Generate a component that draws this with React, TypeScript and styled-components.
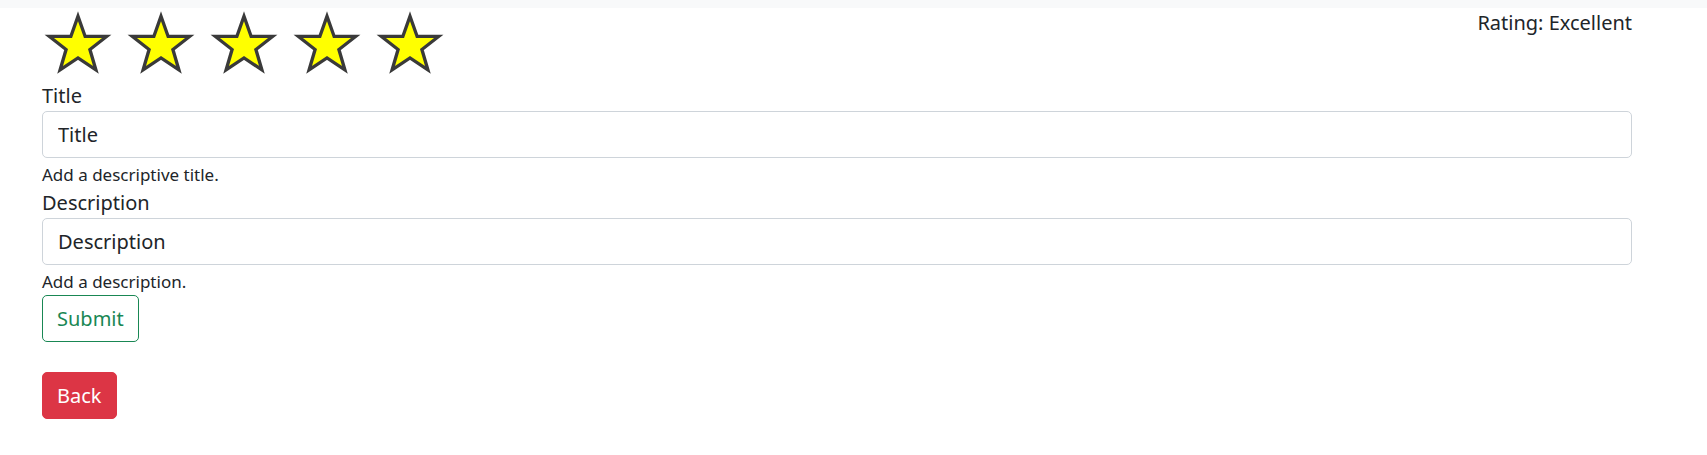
import React from "react";
import styled, { createGlobalStyle } from "styled-components";

const GlobalStyle = createGlobalStyle`
  html, body {
    margin: 0;
    padding: 0;
    background: #ffffff;
  }
  body {
    font-family: "Noto Sans", "Open Sans", sans-serif;
    font-size: 20px;
    line-height: 1.5;
    color: #212529;
  }
  * { box-sizing: border-box; }
`;

const TopBar = styled.div`
  height: 8px;
  background: #f8f9fa;
`;

const Page = styled.main`
  width: 1590px;
  margin-left: 42px;
  display: flex;
  flex-direction: column;
`;

const Header = styled.div`
  height: 73px;
  display: flex;
  justify-content: space-between;
  align-items: flex-start;
`;

const Stars = styled.div`
  display: flex;
  gap: 23px;
  padding-top: 7px;
  padding-left: 6px;
`;

const StarSvg = styled.svg`
  width: 60px;
  height: 56px;
  overflow: visible;
  display: block;
`;

const RatingText = styled.div`
  font-size: 20px;
  line-height: 30px;
  white-space: nowrap;
`;

const Form = styled.form`
  display: flex;
  flex-direction: column;
  align-items: flex-start;
`;

const Label = styled.label`
  display: block;
  font-size: 20px;
  line-height: 30px;
`;

const Input = styled.input`
  display: block;
  width: 100%;
  height: 47px;
  padding: 7px 15px;
  font-family: inherit;
  font-size: 20px;
  line-height: 30px;
  color: #212529;
  background: #fff;
  border: 1px solid #ced4da;
  border-radius: 5px;
  outline: none;
`;

const Help = styled.div`
  margin-top: 4px;
  font-size: 17px;
  line-height: 26px;
  color: #212529;
`;

const Button = styled.button<{ $variant: "outline-success" | "danger" }>`
  display: inline-block;
  height: 47px;
  padding: 7px 14px;
  font-family: inherit;
  font-size: 20px;
  line-height: 30px;
  border-radius: 5px;
  cursor: pointer;
  border: 1px solid
    ${(p) => (p.$variant === "danger" ? "#dc3545" : "#198754")};
  background: ${(p) => (p.$variant === "danger" ? "#dc3545" : "#ffffff")};
  color: ${(p) => (p.$variant === "danger" ? "#ffffff" : "#198754")};
`;

const BackWrap = styled.div`
  margin-top: 30px;
`;

const Star: React.FC = () => (
  <StarSvg viewBox="0 0 50 47">
    <path
      d="m25,1 6,17h18l-14,11 5,17-15-10-15,10 5-17-14-11h18z"
      fill="#ffff00"
      stroke="#3a3a3a"
      strokeWidth={2.8}
      strokeLinejoin="miter"
    />
  </StarSvg>
);

export default function App() {
  return (
    <>
      <GlobalStyle />
      <TopBar />
      <Page>
        <Header>
          <Stars>
            {[0, 1, 2, 3, 4].map((i) => (
              <Star key={i} />
            ))}
          </Stars>
          <RatingText>Rating: Excellent</RatingText>
        </Header>
        <Form onSubmit={(e) => e.preventDefault()}>
          <Label htmlFor="title">Title</Label>
          <Input id="title" defaultValue="Title" />
          <Help>Add a descriptive title.</Help>
          <Label htmlFor="description">Description</Label>
          <Input id="description" defaultValue="Description" />
          <Help>Add a description.</Help>
          <Button type="submit" $variant="outline-success">
            Submit
          </Button>
        </Form>
        <BackWrap>
          <Button type="button" $variant="danger">
            Back
          </Button>
        </BackWrap>
      </Page>
    </>
  );
}
